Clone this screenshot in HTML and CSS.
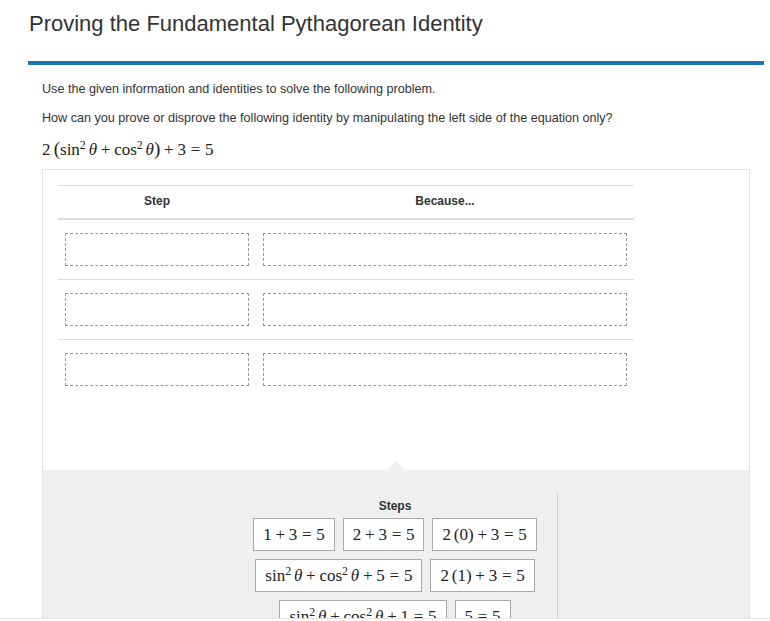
FILE: index.html
```html
<!DOCTYPE html>
<html lang="en">
<head>
<meta charset="utf-8">
<title>Proving the Fundamental Pythagorean Identity</title>
<link rel="stylesheet" href="styles.css">
</head>
<body>
<div class="page">
  <h1 class="title">Proving the Fundamental Pythagorean Identity</h1>
  <div class="rule"></div>
  <div class="content">
    <p class="lead">Use the given information and identities to solve the following problem.</p>
    <p class="lead question">How can you prove or disprove the following identity by manipulating the left side of the equation only?</p>
    <div class="statement math">2<span class="delim open">(</span><span class="fn">sin<sup>2</sup></span><i>θ</i><span class="bin">+</span><span class="fn">cos<sup>2</sup></span><i>θ</i><span class="delim">)</span><span class="bin">+</span>3<span class="rel">=</span>5</div>

    <div class="box">
      <div class="work">
        <div class="proof">
          <div class="prow head">
            <div class="th">Step</div>
            <div class="th">Because...</div>
          </div>
          <div class="prow">
            <div class="cell"><div class="slot"></div></div>
            <div class="cell"><div class="slot"></div></div>
          </div>
          <div class="prow">
            <div class="cell"><div class="slot"></div></div>
            <div class="cell"><div class="slot"></div></div>
          </div>
          <div class="prow">
            <div class="cell"><div class="slot"></div></div>
            <div class="cell"><div class="slot"></div></div>
          </div>
        </div>
      </div>
      <div class="tray">
        <div class="bank">
          <div class="bank-title">Steps</div>
          <div class="chips">
            <div class="chip math">1<span class="bin">+</span>3<span class="rel">=</span>5</div>
            <div class="chip math">2<span class="bin">+</span>3<span class="rel">=</span>5</div>
            <div class="chip math">2<span class="sp">(</span>0)<span class="bin">+</span>3<span class="rel">=</span>5</div>
            <div class="chip math"><span class="fn">sin<sup>2</sup></span><i>θ</i><span class="bin">+</span><span class="fn">cos<sup>2</sup></span><i>θ</i><span class="bin">+</span>5<span class="rel">=</span>5</div>
            <div class="chip math">2<span class="sp">(</span>1)<span class="bin">+</span>3<span class="rel">=</span>5</div>
            <div class="chip math"><span class="fn">sin<sup>2</sup></span><i>θ</i><span class="bin">+</span><span class="fn">cos<sup>2</sup></span><i>θ</i><span class="bin">+</span>1<span class="rel">=</span>5</div>
            <div class="chip math">5<span class="rel">=</span>5</div>
          </div>
        </div>
      </div>
    </div>
  </div>
</div>
</body>
</html>
```
FILE: styles.css
```css
html, body {
  margin: 0;
  padding: 0;
  background: #fff;
}
body {
  font-family: "Liberation Sans", Arial, sans-serif;
  color: #333;
}
.page {
  height: 618px;
  overflow: hidden;
  border-bottom: 1px solid #e4e4e4;
  padding: 0 6px 0 28px;
}
.title {
  margin: 11px 0 0 1px;
  font-size: 22px;
  line-height: 26px;
  font-weight: normal;
  color: #333;
}
.rule {
  margin-top: 24px;
  height: 4px;
  background: #1b75b4;
}
.content {
  padding: 0 14px;
}
.lead {
  margin: 15px 0 0;
  font-size: 12.6px;
  line-height: 18px;
}
.question {
  margin-top: 11px;
}
.math {
  font-family: "Liberation Serif", "Times New Roman", serif;
  font-size: 17px;
  color: #222;
}
.math i {
  font-style: italic;
}
.math sup {
  font-size: 0.7em;
  line-height: 0;
  vertical-align: 0.5em;
}
.fn {
  margin-right: 0.1667em;
}
.bin {
  margin: 0 0.222em;
}
.rel {
  margin: 0 0.278em;
}
.sp {
  margin-left: 0.1667em;
}
.delim {
  font-size: 1.12em;
  line-height: 0;
}
.open {
  margin-left: 0.1667em;
}
.statement {
  margin-top: 11px;
  line-height: 24px;
}
.box {
  margin-top: 7px;
  border: 1px solid #e3e3e3;
  border-bottom: none;
}
.work {
  height: 300px;
  box-sizing: border-box;
  padding: 15px 0 0 15px;
}
.proof {
  width: 576px;
}
.prow {
  display: grid;
  grid-template-columns: 198px 378px;
  border-bottom: 1px solid #dcdcdc;
}
.prow:last-child {
  border-bottom: none;
}
.head {
  border-top: 1px solid #dcdcdc;
  border-bottom: 2px solid #dcdcdc;
}
.th {
  height: 32px;
  line-height: 31px;
  text-align: center;
  font-size: 12px;
  font-weight: bold;
  color: #333;
}
.cell {
  padding: 13px 7px 13px;
}
.slot {
  height: 33px;
  box-sizing: border-box;
  border: 1px dashed #999;
  background: #fff;
}
.tray {
  position: relative;
  background: #efefef;
  height: 200px;
  padding-top: 23px;
  box-sizing: border-box;
}
.tray::before {
  content: "";
  position: absolute;
  top: -9px;
  left: 344px;
  border-left: 9px solid transparent;
  border-right: 9px solid transparent;
  border-bottom: 9px solid #efefef;
}
.bank {
  margin-left: 190px;
  width: 324px;
  height: 200px;
  border-right: 1px solid #cfcfcf;
}
.bank-title {
  padding-top: 6px;
  line-height: 14px;
  font-size: 12px;
  font-weight: bold;
  text-align: center;
  color: #333;
}
.chips {
  margin-top: 5px;
  display: flex;
  flex-wrap: wrap;
  justify-content: center;
  gap: 8px;
}
.chip {
  height: 33px;
  box-sizing: border-box;
  padding: 0 9px;
  line-height: 31px;
  border: 1px solid #a9a9a9;
  background: #fff;
  white-space: nowrap;
}
```
